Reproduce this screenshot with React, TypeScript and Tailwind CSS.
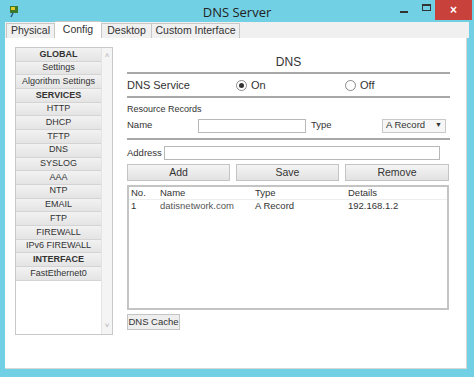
const menu = [
  { t: "GLOBAL", b: true },
  { t: "Settings" },
  { t: "Algorithm Settings" },
  { t: "SERVICES", b: true },
  { t: "HTTP" },
  { t: "DHCP" },
  { t: "TFTP" },
  { t: "DNS" },
  { t: "SYSLOG" },
  { t: "AAA" },
  { t: "NTP" },
  { t: "EMAIL" },
  { t: "FTP" },
  { t: "FIREWALL" },
  { t: "IPv6 FIREWALL" },
  { t: "INTERFACE", b: true },
  { t: "FastEthernet0" },
];

const Radio = ({ on }: { on?: boolean }) => (
  <span className="w-[11px] h-[11px] rounded-full border border-[#8a8a8a] bg-white flex items-center justify-center">
    {on && <span className="w-[5px] h-[5px] rounded-full bg-[#333]" />}
  </span>
);

const Btn = ({ label, w }: { label: string; w: string }) => (
  <div
    className={`${w} h-[17px] border border-[#c4c4c4] bg-gradient-to-b from-[#f4f4f4] to-[#e2e2e2] flex items-center justify-center text-[10.5px] text-[#333]`}
  >
    {label}
  </div>
);

export default function App() {
  return (
    <div
      className="w-[474px] h-[377px] bg-[#72d0e4] flex flex-col overflow-hidden whitespace-nowrap"
      style={{ fontFamily: "'Liberation Sans', Arial, sans-serif" }}
    >
      {/* title bar */}
      <div className="h-[22px] flex items-center relative shrink-0">
        <svg className="ml-[8px]" width="12" height="13" viewBox="0 0 12 13">
          <rect x="2" y="1" width="8" height="7" fill="#3c7a2a" />
          <rect x="3" y="2" width="4" height="3" fill="#e2c92b" />
          <path d="M5 8 L3 12" stroke="#2a5a8a" strokeWidth="1.5" />
        </svg>
        <div
          className="absolute left-0 right-0 top-[3px] text-center text-[13px] text-[#222]"
          style={{ fontFamily: "'Open Sans', 'Noto Sans', sans-serif" }}
        >
          DNS Server
        </div>
        <div className="ml-auto flex items-start h-full">
          <div className="w-[8px] h-[2px] bg-[#333] mt-[11px] mr-[14px]" />
          <div className="w-[9px] h-[7px] border border-[#333] border-t-2 mt-[4px] mr-[4px]" />
          <div className="w-[37px] h-[20px] bg-[#c9413b] flex items-center justify-center text-white text-[12px] font-bold mr-[2px]">
            ×
          </div>
        </div>
      </div>

      {/* tabs */}
      <div className="mx-[5px] bg-[#f0f0f0] h-[16px] flex items-end text-[10.5px] text-[#333] shrink-0">
        <div className="ml-[1px] w-[49px] h-[15px] border border-[#c8c8c8] border-b-0 bg-[#f0f0f0] flex items-center justify-center">
          Physical
        </div>
        <div className="w-[46px] h-[17px] -mt-[2px] bg-white border-t border-[#c8c8c8] flex items-center justify-center">
          Config
        </div>
        <div className="w-[51px] h-[15px] border border-[#c8c8c8] border-b-0 bg-[#f0f0f0] flex items-center justify-center">
          Desktop
        </div>
        <div className="w-[88px] h-[15px] border border-[#c8c8c8] border-b-0 border-l-0 bg-[#f0f0f0] flex items-center justify-center">
          Custom Interface
        </div>
      </div>

      {/* panel */}
      <div className="mx-[5px] mr-[7px] h-[331px] bg-white border-r border-b border-[#d8d8d8] flex pl-[10px] pt-[9px] shrink-0">
        {/* left menu */}
        <div className="w-[98px] h-[288px] border border-[#c8c8c8] flex shrink-0">
          <div className="w-[85px] flex flex-col">
            {menu.map((m) => (
              <div
                key={m.t}
                className={`h-[13.7px] border-b border-[#d4d4d4] bg-gradient-to-b from-[#f2f2f2] to-[#e4e4e4] flex items-center justify-center text-[9px] text-[#333] ${m.b ? "font-bold" : ""}`}
              >
                {m.t}
              </div>
            ))}
          </div>
          <div className="flex-1 bg-[#f4f4f4] border-l border-[#e4e4e4] flex flex-col items-center justify-between py-[2px] text-[8px] text-[#b0b0b0]">
            <span>˄</span>
            <span>˅</span>
          </div>
        </div>

        {/* right side */}
        <div className="w-[323px] ml-[14px] flex flex-col text-[#333]">
          <div className="h-[24px] flex items-center justify-center text-[12px] pt-[5px]">DNS</div>
          <div className="h-[2px] bg-[#a8a8a8] mt-[1px]" />
          <div className="h-[22px] flex items-center text-[11px]">
            <span className="w-[109px]">DNS Service</span>
            <Radio on />
            <span className="ml-[4px] w-[94px]">On</span>
            <Radio />
            <span className="ml-[4px]">Off</span>
          </div>
          <div className="h-[2px] bg-[#a8a8a8]" />
          <div className="h-[19px] flex items-end text-[9px] pb-[1px]">Resource Records</div>
          <div className="h-[17px] flex items-center text-[9.5px]">
            <span className="w-[71px]">Name</span>
            <div className="w-[108px] h-[14px] border border-[#b8b8b8]" />
            <span className="ml-[5px] w-[71px]">Type</span>
            <div className="w-[64px] h-[14px] border border-[#c8c8c8] bg-[#f6f6f6] flex items-center px-[3px] text-[9.5px]">
              <span>A Record</span>
              <span className="ml-auto text-[7px]">▼</span>
            </div>
          </div>
          <div className="h-[2px] bg-[#a8a8a8] mt-[4px]" />
          <div className="h-[20px] flex items-center text-[9.5px] mt-[3px]">
            <span className="w-[37px]">Address</span>
            <div className="w-[276px] h-[14px] border border-[#b8b8b8]" />
          </div>
          <div className="flex gap-[6px] mt-[1px]">
            <Btn label="Add" w="w-[103px]" />
            <Btn label="Save" w="w-[103px]" />
            <Btn label="Remove" w="w-[104px]" />
          </div>
          <div className="w-[322px] h-[125px] border-2 border-[#c4c4c4] mt-[4px] text-[9.5px]">
            <div className="h-[13px] flex items-center border-b border-[#eeeeee]">
              <span className="ml-[2px] w-[29px]">No.</span>
              <span className="w-[95px]">Name</span>
              <span className="w-[93px]">Type</span>
              <span>Details</span>
            </div>
            <div className="h-[13px] flex items-center">
              <span className="ml-[2px] w-[29px]">1</span>
              <span className="w-[95px] text-[#555]">datisnetwork.com</span>
              <span className="w-[93px]">A Record</span>
              <span>192.168.1.2</span>
            </div>
          </div>
          <div className="mt-[4px] w-[53px] h-[16px] border border-[#c4c4c4] bg-[#eeeeee] flex items-center justify-center text-[9.5px]">
            DNS Cache
          </div>
        </div>
      </div>
    </div>
  );
}
